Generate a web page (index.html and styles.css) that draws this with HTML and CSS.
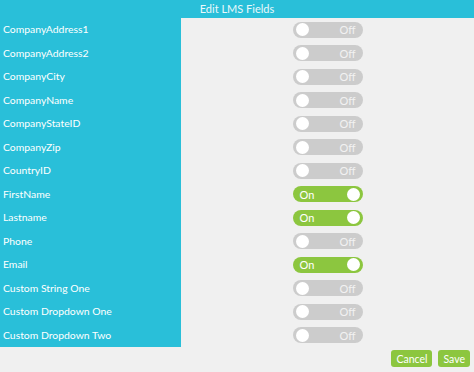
FILE: index.html
```html
<!DOCTYPE html>
<html lang="en">
<head>
    <meta charset="UTF-8">
    <title>Edit LMS Fields</title>
    <link rel="stylesheet" href="styles.css">
</head>
<body>
    <div class="dialog">
        <div class="header">Edit LMS Fields</div>
        <div class="fields">
            <div class="row"><div class="label">CompanyAddress1</div><div class="cell"><div class="toggle off"><span class="knob"></span><span class="text">Off</span></div></div></div>
            <div class="row"><div class="label">CompanyAddress2</div><div class="cell"><div class="toggle off"><span class="knob"></span><span class="text">Off</span></div></div></div>
            <div class="row"><div class="label">CompanyCity</div><div class="cell"><div class="toggle off"><span class="knob"></span><span class="text">Off</span></div></div></div>
            <div class="row"><div class="label">CompanyName</div><div class="cell"><div class="toggle off"><span class="knob"></span><span class="text">Off</span></div></div></div>
            <div class="row"><div class="label">CompanyStateID</div><div class="cell"><div class="toggle off"><span class="knob"></span><span class="text">Off</span></div></div></div>
            <div class="row"><div class="label">CompanyZip</div><div class="cell"><div class="toggle off"><span class="knob"></span><span class="text">Off</span></div></div></div>
            <div class="row"><div class="label">CountryID</div><div class="cell"><div class="toggle off"><span class="knob"></span><span class="text">Off</span></div></div></div>
            <div class="row"><div class="label">FirstName</div><div class="cell"><div class="toggle on"><span class="text">On</span><span class="knob"></span></div></div></div>
            <div class="row"><div class="label">Lastname</div><div class="cell"><div class="toggle on"><span class="text">On</span><span class="knob"></span></div></div></div>
            <div class="row"><div class="label">Phone</div><div class="cell"><div class="toggle off"><span class="knob"></span><span class="text">Off</span></div></div></div>
            <div class="row"><div class="label">Email</div><div class="cell"><div class="toggle on"><span class="text">On</span><span class="knob"></span></div></div></div>
            <div class="row"><div class="label">Custom String One</div><div class="cell"><div class="toggle off"><span class="knob"></span><span class="text">Off</span></div></div></div>
            <div class="row"><div class="label">Custom Dropdown One</div><div class="cell"><div class="toggle off"><span class="knob"></span><span class="text">Off</span></div></div></div>
            <div class="row"><div class="label">Custom Dropdown Two</div><div class="cell"><div class="toggle off"><span class="knob"></span><span class="text">Off</span></div></div></div>
        </div>
        <div class="footer">
            <button class="btn">Cancel</button>
            <button class="btn">Save</button>
        </div>
    </div>
</body>
</html>
```

FILE: styles.css
```css
body {
    margin: 0;
    padding: 0;
    font-family: Lato, "Noto Sans", sans-serif;
    background: #f0f0f0;
}

.dialog {
    width: 474px;
    height: 372px;
    display: flex;
    flex-direction: column;
    background: #f0f0f0;
}

.header {
    height: 18px;
    line-height: 18px;
    background: #29bfd9;
    color: #eaf8fb;
    text-align: center;
    font-size: 11px;
}

.row {
    display: flex;
    height: 23.5px;
}

.label {
    width: 181px;
    background: #29bfd9;
    color: #ffffff;
    font-size: 10.4px;
    line-height: 23.5px;
    padding-left: 3px;
    box-sizing: border-box;
}

.cell {
    flex: 1;
    display: flex;
    align-items: center;
    justify-content: center;
}

.toggle {
    width: 70px;
    height: 16px;
    border-radius: 8px;
    display: flex;
    align-items: center;
    justify-content: space-between;
    padding: 0 3px;
    box-sizing: border-box;
    font-size: 11px;
    color: #ffffff;
}

.toggle.off {
    background: #cccccc;
    color: #f2f2f2;
}

.toggle.on {
    background: #8cc63f;
}

.knob {
    width: 13px;
    height: 13px;
    border-radius: 50%;
    background: #ffffff;
}

.toggle.off .text {
    padding-right: 4px;
}

.toggle.on .text {
    padding-left: 4px;
}

.footer {
    display: flex;
    justify-content: flex-end;
    gap: 6px;
    padding: 3px 4px 0 0;
}

.btn {
    background: #8cc63f;
    color: #ffffff;
    border: none;
    border-radius: 3px;
    font-family: Lato, "Noto Sans", sans-serif;
    font-size: 10.5px;
    height: 17px;
    padding: 0 5px;
}
```
